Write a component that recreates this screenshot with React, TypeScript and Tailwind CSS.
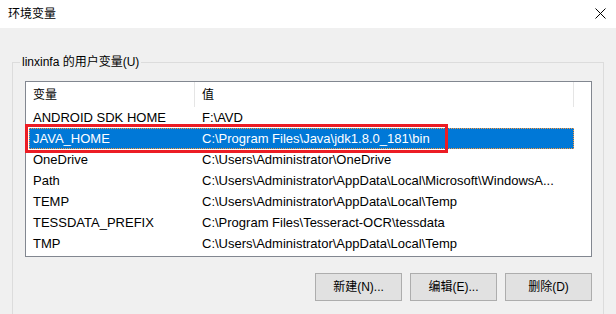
import React from "react";

const rows: [string, string][] = [
  ["ANDROID SDK HOME", "F:\\AVD"],
  ["JAVA_HOME", "C:\\Program Files\\Java\\jdk1.8.0_181\\bin"],
  ["OneDrive", "C:\\Users\\Administrator\\OneDrive"],
  ["Path", "C:\\Users\\Administrator\\AppData\\Local\\Microsoft\\WindowsA..."],
  ["TEMP", "C:\\Users\\Administrator\\AppData\\Local\\Temp"],
  ["TESSDATA_PREFIX", "C:\\Program Files\\Tesseract-OCR\\tessdata"],
  ["TMP", "C:\\Users\\Administrator\\AppData\\Local\\Temp"],
];

export default function App() {
  return (
    <div
      className="w-[616px] h-[314px] overflow-hidden bg-[#f0f0f0] text-[12px] text-black"
      style={{ fontFamily: '"Liberation Sans", "Noto Sans CJK SC", sans-serif' }}
    >
      <div className="h-[28px] bg-white flex items-center justify-between pl-[8px] pr-[10px]">
        <span className="leading-[16px]">环境变量</span>
        <svg width="11" height="11" viewBox="0 0 11 11" className="mt-[-2px]">
          <path d="M0.5 0.5 L10.5 10.5 M10.5 0.5 L0.5 10.5" stroke="#000" strokeWidth="1" />
        </svg>
      </div>
      <fieldset className="mt-[26px] ml-[12px] w-[592px] h-[300px] border border-[#dcdcdc]">
        <legend className="ml-[7px] px-[2px] leading-[16px]">linxinfa 的用户变量(U)</legend>
        <div className="relative mt-[11px] ml-[12px] w-[567px] h-[176px] border border-[#828790] bg-white">
          <div className="flex h-[25px] items-center pl-[3px]">
            <div className="w-[166px] h-full flex items-center pl-[4px] border-r border-[#e5e5e5]">变量</div>
            <div className="w-[379px] h-full flex items-center pl-[7px] border-r border-[#e5e5e5]">值</div>
          </div>
          {rows.map(([k, v], i) => {
            const sel = i === 1;
            return (
              <div key={k} className="flex h-[21px] pl-[3px] text-[13px]">
                <div
                  className={
                    sel
                      ? "flex w-[545px] h-full items-center bg-[#0078d7] text-white border border-dotted border-[#ff9a3c]"
                      : "flex w-[545px] h-full items-center border border-transparent"
                  }
                >
                  <div className="w-[165px] pl-[3px] whitespace-nowrap">{k}</div>
                  <div className="w-[378px] pl-[7px] whitespace-nowrap overflow-hidden">{v}</div>
                </div>
              </div>
            );
          })}
          <div className="absolute left-[-1px] top-[42px] w-[423px] h-[29px] border-[3px] border-[#ec1c24]" />
        </div>
        <div className="flex justify-end gap-[8px] mt-[16px] mr-[11px]">
          <button className="w-[87px] h-[28px] bg-[#e1e1e1] border border-[#adadad]">新建(N)...</button>
          <button className="w-[87px] h-[28px] bg-[#e1e1e1] border border-[#adadad]">编辑(E)...</button>
          <button className="w-[87px] h-[28px] bg-[#e1e1e1] border border-[#adadad]">删除(D)</button>
        </div>
      </fieldset>
    </div>
  );
}
